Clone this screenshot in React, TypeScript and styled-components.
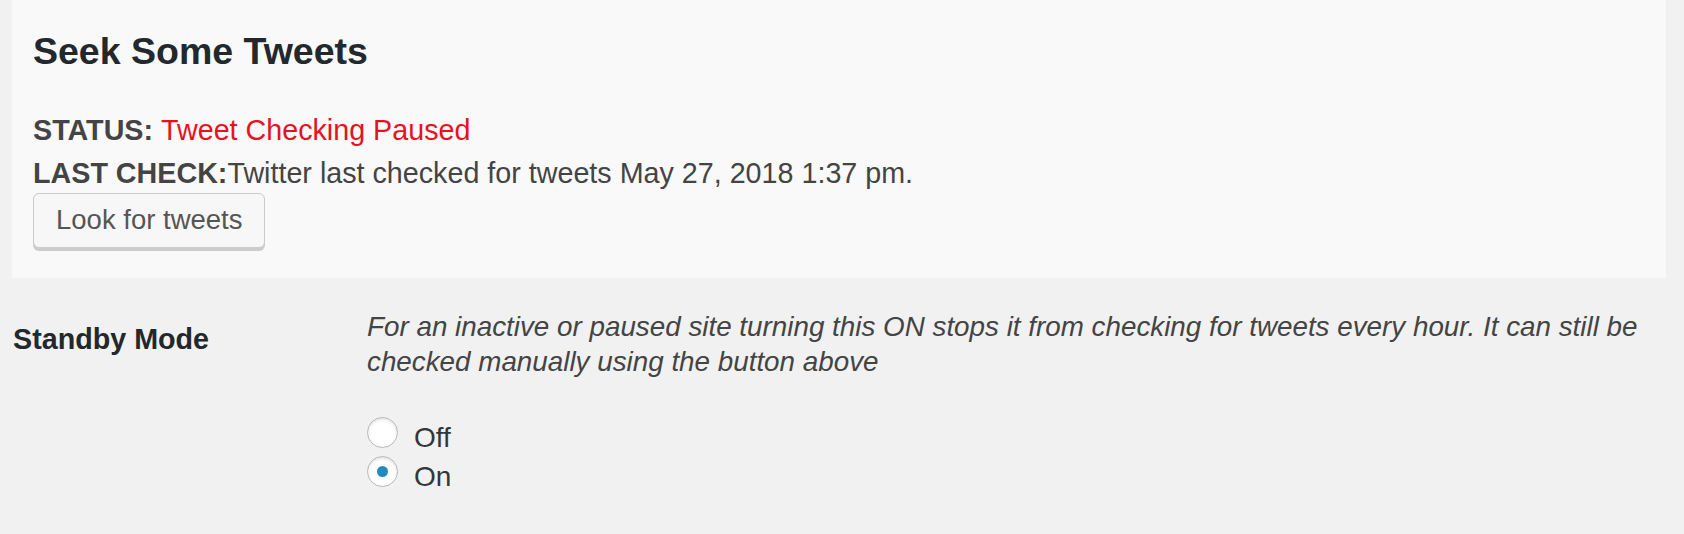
import React from "react";
import styled, { createGlobalStyle } from "styled-components";

const GlobalStyle = createGlobalStyle`
  html, body {
    margin: 0;
    padding: 0;
    background: #f1f1f1;
  }
  body {
    font-family: "Liberation Sans", Arial, sans-serif;
    color: #444;
  }
`;

const Page = styled.div`
  padding: 0 18px 0 12px;
  width: 1684px;
  box-sizing: border-box;
`;

const Panel = styled.div`
  background: #f9f9f9;
  padding: 0 21px 30px;
`;

const Title = styled.h2`
  margin: 0;
  padding-top: 30px;
  font-size: 37.5px;
  line-height: 43px;
  font-weight: 700;
  color: #23282d;
`;

const InfoList = styled.div`
  margin-top: 36px;
`;

const InfoRow = styled.div`
  font-size: 28.7px;
  line-height: 43px;
  color: #444;
`;

const Label = styled.strong`
  font-weight: 700;
`;

const Status = styled.span<{ $tone: "paused" | "active" }>`
  color: ${(p) => (p.$tone === "paused" ? "#e8111f" : "#46b450")};
`;

const Button = styled.button`
  display: block;
  margin-top: -2px;
  height: 55px;
  padding: 0 22px 2px;
  font-family: inherit;
  font-size: 27.5px;
  color: #555;
  background: #f7f7f7;
  border: 1px solid #ccc;
  border-radius: 6px;
  box-shadow: 0 3px 0 #ccc;
  cursor: pointer;
`;

const FormRow = styled.div`
  display: flex;
`;

const RowHeading = styled.div`
  width: 354px;
  flex-shrink: 0;
  padding: 44px 0 0 1px;
  font-size: 28.7px;
  line-height: 34px;
  font-weight: 700;
  color: #23282d;
`;

const RowBody = styled.div`
  padding-top: 31px;
  flex: 1;
`;

const Description = styled.p`
  margin: 0;
  font-size: 27.8px;
  line-height: 35px;
  font-style: italic;
  color: #444;
`;

const Options = styled.fieldset`
  border: 0;
  margin: 39px 0 0;
  padding: 0;
`;

const Option = styled.label`
  display: flex;
  align-items: center;
  gap: 16px;
  font-size: 28px;
  line-height: 39px;
  color: #32373c;
  cursor: pointer;
`;

const Radio = styled.span<{ $checked: boolean }>`
  position: relative;
  width: 31px;
  height: 31px;
  margin-top: -11px;
  box-sizing: border-box;
  border-radius: 50%;
  background: #fff;
  border: 1px solid #b4b9be;
  box-shadow: inset 0 2px 3px rgba(0, 0, 0, 0.1);
  flex-shrink: 0;

  &::after {
    content: "";
    display: ${(p) => (p.$checked ? "block" : "none")};
    position: absolute;
    left: 9px;
    top: 9px;
    width: 11px;
    height: 11px;
    border-radius: 50%;
    background: #1e8cbe;
  }
`;

const modes = [
  { key: "off", label: "Off" },
  { key: "on", label: "On" },
];

export default function App() {
  const [mode, setMode] = React.useState("on");
  return (
    <Page>
      <GlobalStyle />
      <Panel>
        <Title>Seek Some Tweets</Title>
        <InfoList>
          <InfoRow>
            <Label>STATUS: </Label>
            <Status $tone="paused">Tweet Checking Paused</Status>
          </InfoRow>
          <InfoRow>
            <Label>LAST CHECK:</Label>Twitter last checked for tweets May 27, 2018 1:37 pm.
          </InfoRow>
        </InfoList>
        <Button type="button">Look for tweets</Button>
      </Panel>
      <FormRow>
        <RowHeading>Standby Mode</RowHeading>
        <RowBody>
          <Description>
            For an inactive or paused site turning this ON stops it from checking for tweets every hour. It can still be
            checked manually using the button above
          </Description>
          <Options>
            {modes.map((m) => (
              <Option key={m.key} onClick={() => setMode(m.key)}>
                <Radio $checked={mode === m.key} />
                {m.label}
              </Option>
            ))}
          </Options>
        </RowBody>
      </FormRow>
    </Page>
  );
}
